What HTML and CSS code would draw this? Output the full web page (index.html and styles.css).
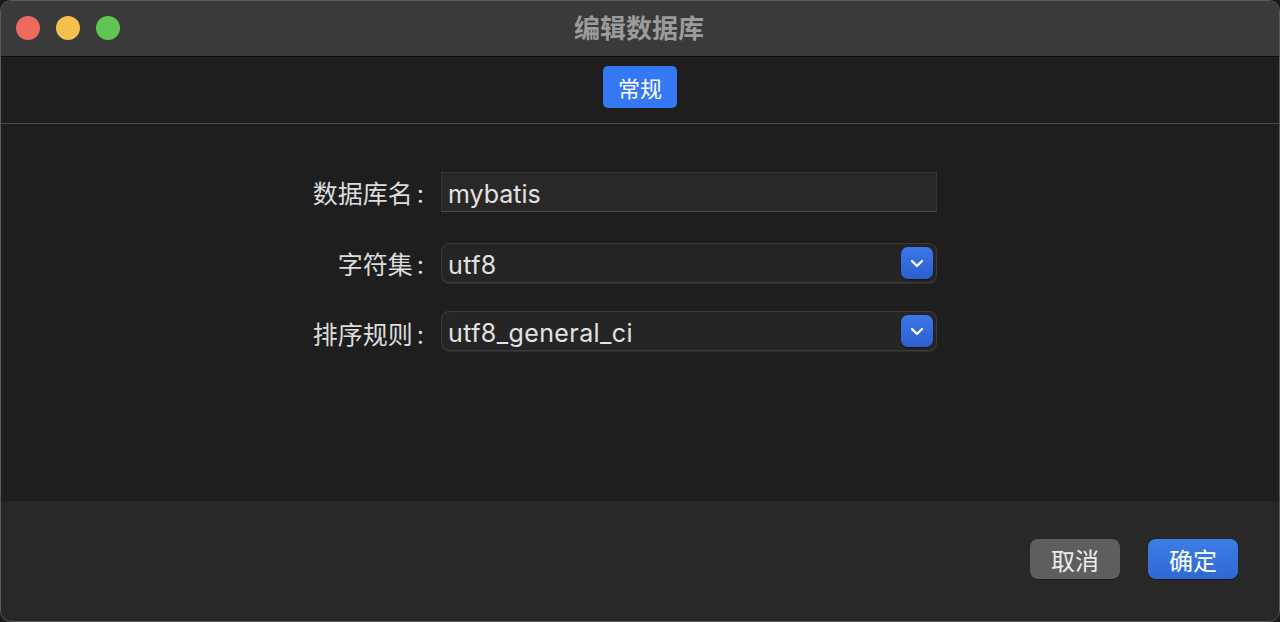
FILE: index.html
```html
<!DOCTYPE html>
<html lang="zh">
<head>
<meta charset="utf-8">
<title>编辑数据库</title>
<link rel="stylesheet" href="styles.css">
</head>
<body>
<div class="window">
  <div class="titlebar">
    <div class="lights">
      <span class="light red"></span>
      <span class="light yellow"></span>
      <span class="light green"></span>
    </div>
    <div class="title">编辑数据库</div>
  </div>
  <div class="toolbar">
    <div class="tab active">常规</div>
  </div>
  <div class="content">
    <div class="form">
      <label class="label">数据库名<span class="colon">:</span></label>
      <div class="input">mybatis</div>
      <label class="label">字符集<span class="colon">:</span></label>
      <div class="select">
        <span class="value">utf8</span>
        <span class="drop"><svg width="14" height="9" viewBox="0 0 14 9"><path d="M2 2 L7 7 L12 2" fill="none" stroke="#fff" stroke-width="2.4" stroke-linecap="round" stroke-linejoin="round"/></svg></span>
      </div>
      <label class="label">排序规则<span class="colon">:</span></label>
      <div class="select">
        <span class="value">utf8_general_ci</span>
        <span class="drop"><svg width="14" height="9" viewBox="0 0 14 9"><path d="M2 2 L7 7 L12 2" fill="none" stroke="#fff" stroke-width="2.4" stroke-linecap="round" stroke-linejoin="round"/></svg></span>
      </div>
    </div>
  </div>
  <div class="footer">
    <div class="btn cancel">取消</div>
    <div class="btn ok">确定</div>
  </div>
</div>
</body>
</html>
```
FILE: styles.css
```css
* { box-sizing: border-box; }
html, body {
  margin: 0;
  padding: 0;
  background: #1a1a1a;
  width: 1280px;
  height: 622px;
  overflow: hidden;
}
body {
  font-family: "Inter", "Noto Sans CJK SC", sans-serif;
  color: #dedede;
}
.window {
  width: 1280px;
  height: 622px;
  border: 1px solid #5a5a5a;
  border-radius: 11px;
  overflow: hidden;
  display: flex;
  flex-direction: column;
  background: #1e1e1e;
  box-shadow: inset 1px 0 0 #3c3c3c, inset -1px 0 0 #3c3c3c;
}
.titlebar {
  height: 56px;
  flex: none;
  background: #3a3a3a;
  border-bottom: 1px solid #0c0c0c;
  display: flex;
  align-items: center;
  justify-content: center;
  position: relative;
}
.lights {
  position: absolute;
  left: 15px;
  top: 15px;
  display: flex;
  gap: 16px;
}
.light {
  width: 24px;
  height: 24px;
  border-radius: 50%;
  display: block;
}
.red { background: #ed6a5e; }
.yellow { background: #f5bf4f; }
.green { background: #61c554; }
.title {
  font-size: 26px;
  font-weight: 700;
  color: #9b9b9b;
  margin-top: -5px;
  margin-left: -2px;
}
.toolbar {
  height: 67px;
  flex: none;
  background: #1e1e1e;
  border-bottom: 1px solid #4e4e4e;
  display: flex;
  justify-content: center;
  padding-top: 9px;
}
.tab {
  width: 74px;
  height: 42px;
  border-radius: 5px;
  display: flex;
  align-items: center;
  justify-content: center;
  font-size: 22px;
  color: #fff;
}
.tab.active { background: #3478f6; }
.content {
  flex: 1;
  background: #1e1e1e;
  padding-top: 48px;
}
.form {
  display: grid;
  grid-template-columns: 423px 496px;
  column-gap: 17px;
  row-gap: 31px;
  align-items: center;
}
.label {
  text-align: right;
  font-size: 25px;
  color: #dcdcdc;
}
.colon {
  margin-left: 4px;
}
.input {
  height: 40px;
  background: #282828;
  border: 1px solid #363636;
  border-bottom-color: #4a4a4a;
  font-size: 25px;
  color: #e2e2e2;
  padding: 4px 0 0 6px;
  display: flex;
  align-items: center;
}
.select {
  height: 40px;
  background: #252525;
  border: 1px solid #3a3a3a;
  border-radius: 8px;
  display: flex;
  align-items: center;
  justify-content: space-between;
  padding: 0 3px 0 6px;
  box-shadow: 0 1px 0 #2e2e2e;
}
.form .select:last-child { margin-top: -3px; }
.value {
  font-size: 25px;
  letter-spacing: 0.4px;
  color: #e2e2e2;
  margin-top: 4px;
}
.drop {
  width: 32px;
  height: 32px;
  border-radius: 7px;
  background: linear-gradient(#3b78e8, #2c5fd0);
  display: flex;
  align-items: center;
  justify-content: center;
  box-shadow: 0 1px 1px rgba(0,0,0,0.4);
}
.footer {
  height: 120px;
  flex: none;
  background: #282828;
  display: flex;
  justify-content: flex-end;
  align-items: flex-start;
  padding: 38px 41px 0 0;
  gap: 28px;
}
.btn {
  width: 90px;
  height: 40px;
  border-radius: 8px;
  display: flex;
  align-items: center;
  justify-content: center;
  font-size: 24px;
  color: #ececec;
}
.cancel {
  background: #5e5e5e;
  box-shadow: 0 1px 1px rgba(0,0,0,0.35);
}
.ok {
  background: linear-gradient(#3b7fe6, #2f69d3);
  color: #fff;
  box-shadow: 0 1px 1px rgba(0,0,0,0.35);
}
```
